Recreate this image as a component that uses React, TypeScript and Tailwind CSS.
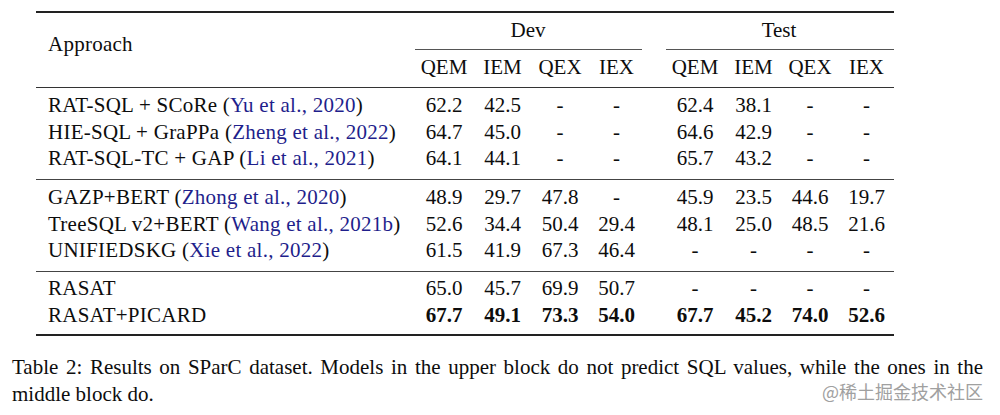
const COLS =
  'grid grid-cols-[377px_62px_55px_60px_53px_21px_62px_55px_58px_55px]';

type Row = {
  name: string;
  cite?: string;
  dev: string[];
  test: string[];
  bold?: boolean;
};

const blocks: Row[][] = [
  [
    { name: 'RAT-SQL + SCoRe', cite: 'Yu et al., 2020', dev: ['62.2', '42.5', '-', '-'], test: ['62.4', '38.1', '-', '-'] },
    { name: 'HIE-SQL + GraPPa', cite: 'Zheng et al., 2022', dev: ['64.7', '45.0', '-', '-'], test: ['64.6', '42.9', '-', '-'] },
    { name: 'RAT-SQL-TC + GAP', cite: 'Li et al., 2021', dev: ['64.1', '44.1', '-', '-'], test: ['65.7', '43.2', '-', '-'] },
  ],
  [
    { name: 'GAZP+BERT', cite: 'Zhong et al., 2020', dev: ['48.9', '29.7', '47.8', '-'], test: ['45.9', '23.5', '44.6', '19.7'] },
    { name: 'TreeSQL v2+BERT', cite: 'Wang et al., 2021b', dev: ['52.6', '34.4', '50.4', '29.4'], test: ['48.1', '25.0', '48.5', '21.6'] },
    { name: 'UNIFIEDSKG', cite: 'Xie et al., 2022', dev: ['61.5', '41.9', '67.3', '46.4'], test: ['-', '-', '-', '-'] },
  ],
  [
    { name: 'RASAT', dev: ['65.0', '45.7', '69.9', '50.7'], test: ['-', '-', '-', '-'] },
    { name: 'RASAT+PICARD', dev: ['67.7', '49.1', '73.3', '54.0'], test: ['67.7', '45.2', '74.0', '52.6'], bold: true },
  ],
];

const blockPad = ['pt-[4px] pb-[7px]', 'pt-[4px] pb-[7px]', 'pt-[3px] pb-[6px]'];

function BodyRow({ row }: { row: Row }) {
  const cell = row.bold ? 'text-center font-bold' : 'text-center';
  return (
    <div className={COLS}>
      <div className="pl-[12px] whitespace-nowrap tracking-[0.25px]">
        {row.name}
        {row.cite && (
          <>
            {' ('}
            <span className="text-[#1f1f8c]">{row.cite}</span>
            {')'}
          </>
        )}
      </div>
      {row.dev.map((v, i) => (
        <div key={'d' + i} className={cell}>
          {v}
        </div>
      ))}
      <div />
      {row.test.map((v, i) => (
        <div key={'t' + i} className={cell}>
          {v}
        </div>
      ))}
    </div>
  );
}

export default function App() {
  const heads = ['QEM', 'IEM', 'QEX', 'IEX'];
  return (
    <div className="relative h-[415px] w-[1000px] bg-white pt-[11px] font-['Liberation_Serif','Times_New_Roman',serif] text-[21px] leading-[26.5px] text-[#0d0d0d]">
      <div className="ml-[36px] w-[858px]">
        {/* top rule */}
        <div className="h-[2px] bg-[#222]" />

        {/* header */}
        <div className={COLS + ' leading-[26px]'}>
          <div className="row-span-2 pl-[12px] pt-[18px] tracking-[0.25px]">Approach</div>
          <div className="col-span-4 pt-[4px]">
            <div className="pb-[6px] text-center">Dev</div>
            <div className="mr-[1px] ml-[2px] h-px bg-[#555]" />
          </div>
          <div />
          <div className="col-span-4 pt-[4px]">
            <div className="pb-[6px] text-center">Test</div>
            <div className="ml-[2px] h-px bg-[#555]" />
          </div>
          {heads.map((h) => (
            <div key={'dh' + h} className="pt-[4px] pb-[7px] text-center">
              {h}
            </div>
          ))}
          <div />
          {heads.map((h) => (
            <div key={'th' + h} className="pt-[4px] pb-[7px] text-center">
              {h}
            </div>
          ))}
        </div>

        {blocks.map((rows, b) => (
          <div key={b}>
            <div className={b === 0 ? 'h-px bg-[#333]' : 'h-[1.5px] bg-[#444]'} />
            <div className={blockPad[b]}>
              {rows.map((r) => (
                <BodyRow key={r.name} row={r} />
              ))}
            </div>
          </div>
        ))}

        {/* bottom rule */}
        <div className="h-[2px] bg-[#222]" />
      </div>

      {/* caption */}
      <div className="mt-[18px] ml-[12px] w-[971px] leading-[27px]">
        <div className="text-justify [text-align-last:justify]">
          Table 2: Results on SParC dataset. Models in the upper block do not predict SQL values, while the ones in the
        </div>
        <div>middle block do.</div>
      </div>

      {/* watermark */}
      <div className="absolute top-[379px] right-[17px] font-['Noto_Sans_CJK_SC','Noto_Sans',sans-serif] text-[18px] leading-[24px] text-[#a0a0a0]">
        @稀土掘金技术社区
      </div>
    </div>
  );
}
